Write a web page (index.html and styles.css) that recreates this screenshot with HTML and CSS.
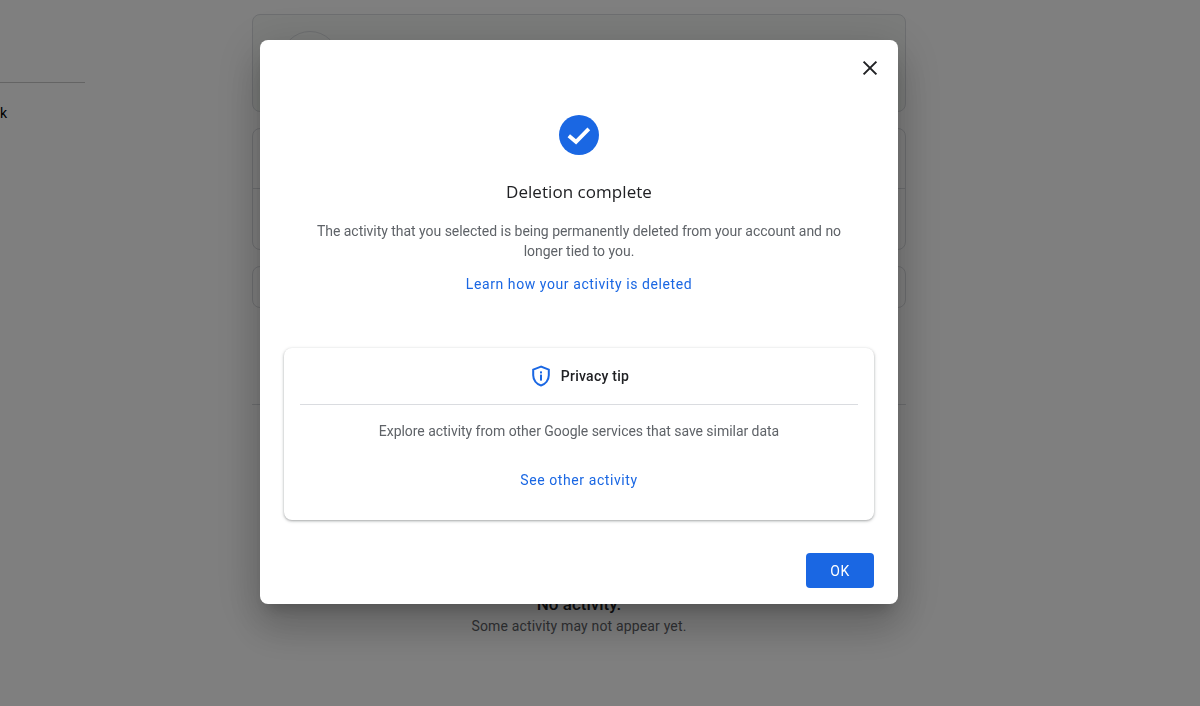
FILE: index.html
```html
<!DOCTYPE html>
<html lang="en">
<head>
<meta charset="utf-8">
<title>Deletion complete</title>
<link rel="stylesheet" href="styles.css">
</head>
<body>
<div class="page">
  <aside class="side">
    <div class="side-rule"></div>
    <div class="side-item">k</div>
  </aside>
  <main class="main">
    <section class="card card-profile"><div class="avatar"></div></section>
    <section class="card card-split"><div class="split-row"></div><div class="split-row"></div></section>
    <section class="card card-small"></section>
    <div class="main-rule"></div>
    <div class="empty">
      <div class="empty-title">No activity.</div>
      <div class="empty-sub">Some activity may not appear yet.</div>
    </div>
  </main>
</div>
<div class="overlay">
  <div class="dialog" role="dialog">
    <button class="close" aria-label="Close">
      <svg width="24" height="24" viewBox="0 0 24 24"><path d="M5.6 5.6 18.4 18.4M18.4 5.6 5.6 18.4" stroke="#202124" stroke-width="2" fill="none"/></svg>
    </button>
    <div class="check">
      <svg width="40" height="40" viewBox="0 0 40 40"><circle cx="20" cy="20" r="20" fill="#1a67e3"/><path d="M9.8 20.8 17 26.8 29.8 13.8" stroke="#fff" stroke-width="3.8" fill="none"/></svg>
    </div>
    <h1 class="title">Deletion complete</h1>
    <p class="desc">The activity that you selected is being permanently deleted from your account and no longer tied to you.</p>
    <a class="link learn" href="#">Learn how your activity is deleted</a>
    <div class="tip">
      <div class="tip-head">
        <svg width="24" height="24" viewBox="0 0 24 24"><path d="M12 2.6 4.2 5.6v5.7c0 4.8 3.3 9 7.8 10.2 4.5-1.2 7.8-5.4 7.8-10.2V5.6z" fill="none" stroke="#1a67e3" stroke-width="2"/><rect x="11" y="10.6" width="2" height="6" fill="#1a67e3"/><rect x="11" y="7.4" width="2" height="2" fill="#1a67e3"/></svg>
        <span class="tip-title">Privacy tip</span>
      </div>
      <p class="tip-text">Explore activity from other Google services that save similar data</p>
      <a class="link tip-link" href="#">See other activity</a>
    </div>
    <div class="actions"><button class="ok">OK</button></div>
  </div>
</div>
</body>
</html>
```
FILE: styles.css
```css
* { box-sizing: border-box; }
html, body { margin: 0; height: 706px; overflow: hidden; }
body { background: #fff; font-family: Roboto, "Liberation Sans", sans-serif; color: #202124; position: relative; }

.page { display: flex; height: 706px; }
.side { width: 85px; flex: none; padding-top: 82px; }
.side-rule { height: 1px; background: #c8c8c8; }
.side-item { margin-top: 20px; font-size: 14px; line-height: 20px; color: #000; }

.main { width: 654px; margin-left: 167px; flex: none; padding-top: 14px; }
.card { border: 1px solid #dadce0; border-radius: 8px; background: #fff; overflow: hidden; }
.card-profile { height: 98px; background: #f6f9f6; padding: 16px 0 0 28px; }
.avatar { width: 58px; height: 58px; border-radius: 50%; border: 1px solid #dadce0; }
.card-split { height: 122px; margin-top: 16px; }
.split-row { height: 59px; }
.split-row + .split-row { height: 61px; border-top: 1px solid #dadce0; }
.card-small { height: 42px; margin-top: 16px; }
.main-rule { height: 1px; background: #dadce0; margin-top: 96px; }
.empty { margin-top: 187px; text-align: center; }
.empty-title { font-size: 17px; line-height: 24px; font-weight: 500; color: #202124; }
.empty-sub { font-size: 14px; line-height: 20px; color: #5f6368; letter-spacing: .16px; }

.overlay { position: fixed; inset: 0; background: rgba(0, 0, 0, .5); padding: 40px 302px 0 260px; }
.dialog { position: relative; height: 564px; background: #fff; border-radius: 8px; box-shadow: 0 11px 15px -7px rgba(0,0,0,.2), 0 24px 38px 3px rgba(0,0,0,.14), 0 9px 46px 8px rgba(0,0,0,.12); padding: 75px 24px 0; display: flex; flex-direction: column; align-items: stretch; text-align: center; }
.close { position: absolute; top: 16px; right: 16px; width: 24px; height: 24px; padding: 0; background: none; border: 0; }
.check { height: 40px; }
.check svg { display: block; margin: 0 auto; }
.title { margin: 24px 0 0; font-family: "Open Sans", Roboto, sans-serif; font-size: 17px; line-height: 26px; font-weight: 400; letter-spacing: .05px; color: #202124; }
.desc { margin: 16px 0 0; padding: 0 24px; font-size: 14px; line-height: 20px; color: #5f6368; letter-spacing: -.03px; }
.link { color: #1a67e3; text-decoration: none; font-size: 14px; line-height: 20px; font-weight: 450; letter-spacing: .58px; }
.learn { margin-top: 13px; }
.tip { margin-top: 54px; height: 172px; border-radius: 8px; background: #fff; box-shadow: 0 1px 2px rgba(60,64,67,.3), 0 1px 3px 1px rgba(60,64,67,.15); display: flex; flex-direction: column; padding: 0 16px; }
.tip-head { height: 57px; border-bottom: 1px solid #dadce0; display: flex; align-items: center; justify-content: center; gap: 8px; }
.tip-title { font-size: 14px; line-height: 20px; font-weight: 500; color: #202124; letter-spacing: .25px; }
.tip-text { margin: 16px 0 0; font-size: 14px; line-height: 20px; color: #5f6368; letter-spacing: -.04px; }
.tip-link { margin-top: 29px; }
.actions { display: flex; justify-content: flex-end; margin-top: 33px; }
.ok { width: 68px; height: 35px; border: 0; border-radius: 4px; background: #1a67e3; color: #fff; font-family: Roboto, sans-serif; font-size: 14px; font-weight: 450; letter-spacing: .5px; }
```
